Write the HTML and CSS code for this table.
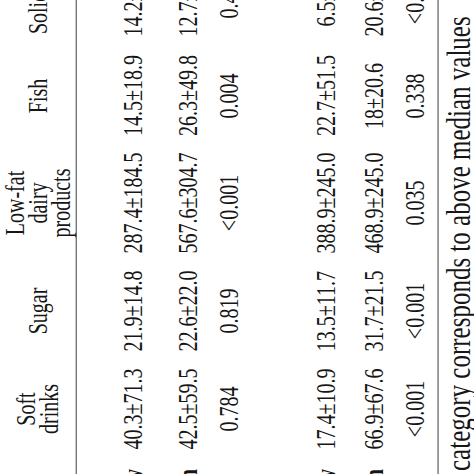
FILE: index.html
```html
<!DOCTYPE html>
<html>
<head>
<meta charset="utf-8">
<link rel="stylesheet" href="styles.css">
</head>
<body>
<div class="stage">
  <div class="sheet">
    <div class="row head">
      <div class="cell label"></div>
      <div class="cell">Soft<br>drinks</div>
      <div class="cell">Sugar</div>
      <div class="cell">Low-fat<br>dairy<br>products</div>
      <div class="cell">Fish</div>
      <div class="cell">Solid fats</div>
    </div>
    <div class="row r1">
      <div class="cell label">Low</div>
      <div class="cell">40.3±71.3</div>
      <div class="cell">21.9±14.8</div>
      <div class="cell">287.4±184.5</div>
      <div class="cell">14.5±18.9</div>
      <div class="cell">14.2±15.6</div>
    </div>
    <div class="row r2">
      <div class="cell label">High</div>
      <div class="cell">42.5±59.5</div>
      <div class="cell">22.6±22.0</div>
      <div class="cell">567.6±304.7</div>
      <div class="cell">26.3±49.8</div>
      <div class="cell">12.7±13.9</div>
    </div>
    <div class="row r3">
      <div class="cell label"></div>
      <div class="cell">0.784</div>
      <div class="cell">0.819</div>
      <div class="cell">&lt;0.001</div>
      <div class="cell">0.004</div>
      <div class="cell">0.412</div>
    </div>
    <div class="row r4">
      <div class="cell label">Low</div>
      <div class="cell">17.4±10.9</div>
      <div class="cell">13.5±11.7</div>
      <div class="cell">388.9±245.0</div>
      <div class="cell">22.7±51.5</div>
      <div class="cell">6.5±8.2</div>
    </div>
    <div class="row r5">
      <div class="cell label">High</div>
      <div class="cell">66.9±67.6</div>
      <div class="cell">31.7±21.5</div>
      <div class="cell">468.9±245.0</div>
      <div class="cell">18±20.6</div>
      <div class="cell">20.6±17.4</div>
    </div>
    <div class="row r6">
      <div class="cell label"></div>
      <div class="cell">&lt;0.001</div>
      <div class="cell">&lt;0.001</div>
      <div class="cell">0.035</div>
      <div class="cell">0.338</div>
      <div class="cell">&lt;0.001</div>
    </div>
    <p class="note">category corresponds to above median values</p>
  </div>
</div>
</body>
</html>
```
FILE: styles.css
```css
html, body {
  margin: 0;
  padding: 0;
  background: #ffffff;
}

.stage {
  width: 474px;
  height: 474px;
  overflow: hidden;
  background: #ffffff;
}

.sheet {
  width: 688px;
  height: 351px;
  transform-origin: 0 0;
  transform: translateY(624px) rotate(-90deg) scaleY(1.35);
  font-family: "Liberation Serif", "Times New Roman", serif;
  font-size: 20px;
  color: #161616;
}

.row {
  display: grid;
  grid-template-columns: 158px 114px 82px 134px 80px 120px;
  line-height: 20px;
  white-space: nowrap;
}

.cell {
  text-align: center;
}

.cell.label {
  text-align: right;
  padding-right: 3px;
  font-weight: bold;
}

.head {
  height: 56px;
  align-items: center;
  line-height: 17px;
  border-bottom: 1.2px solid #707070;
}

.r1 { padding-top: 31px; }
.r2 { padding-top: 21px; }
.r3 { padding-top: 10px; }
.r4 { padding-top: 52px; }
.r5 { padding-top: 16px; }
.r6 {
  padding-top: 10px;
  padding-bottom: 7px;
  border-bottom: 1.2px solid #707070;
}

.note {
  margin: 1.5px 0 0 0;
  padding-left: 153px;
  font-size: 25px;
  line-height: 25px;
  white-space: nowrap;
}
```
